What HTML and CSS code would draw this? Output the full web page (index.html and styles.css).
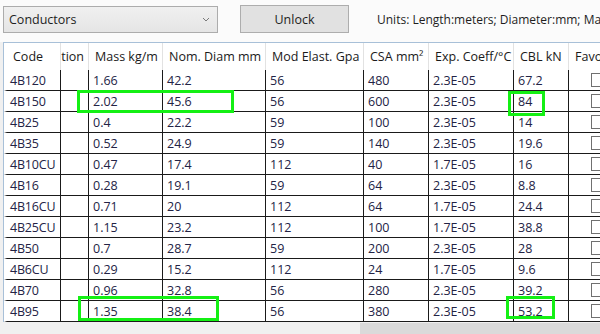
FILE: index.html
```html
<!DOCTYPE html>
<html>
<head>
  <title>Conductors</title>
  <link rel="stylesheet" href="styles.css">
</head>
<body>
  <div class="toolbar">
    <div class="combo">
      <span>Conductors</span>
      <svg class="chev" width="8" height="5" viewBox="0 0 8 5"><path d="M1 1 L4 4 L7 1" fill="none" stroke="#7a7a7a" stroke-width="1"/></svg>
    </div>
    <button class="butt">Unlock</button>
    <div class="units">Units: Length:meters; Diameter:mm; Mass:kg/m</div>
  </div>

  <div class="gridwrap">
    <div class="grid">
      <div class="hd first">Code</div>
      <div class="hd clip">tion</div>
      <div class="hd">Mass kg/m</div>
      <div class="hd">Nom. Diam mm</div>
      <div class="hd">Mod Elast. Gpa</div>
      <div class="hd">CSA mm²</div>
      <div class="hd">Exp. Coeff/°C</div>
      <div class="hd">CBL kN</div>
      <div class="hd">Favourite</div>

      <div class="c first">4B120</div><div class="c"></div><div class="c">1.66</div><div class="c">42.2</div><div class="c">56</div><div class="c">480</div><div class="c">2.3E-05</div><div class="c">67.2</div><div class="c chk"><span class="box"></span></div>
      <div class="c first">4B150</div><div class="c"></div><div class="c">2.02</div><div class="c">45.6</div><div class="c">56</div><div class="c">600</div><div class="c">2.3E-05</div><div class="c">84</div><div class="c chk"><span class="box"></span></div>
      <div class="c first">4B25</div><div class="c"></div><div class="c">0.4</div><div class="c">22.2</div><div class="c">59</div><div class="c">100</div><div class="c">2.3E-05</div><div class="c">14</div><div class="c chk"><span class="box"></span></div>
      <div class="c first">4B35</div><div class="c"></div><div class="c">0.52</div><div class="c">24.9</div><div class="c">59</div><div class="c">140</div><div class="c">2.3E-05</div><div class="c">19.6</div><div class="c chk"><span class="box"></span></div>
      <div class="c first">4B10CU</div><div class="c"></div><div class="c">0.47</div><div class="c">17.4</div><div class="c">112</div><div class="c">40</div><div class="c">1.7E-05</div><div class="c">16</div><div class="c chk"><span class="box"></span></div>
      <div class="c first">4B16</div><div class="c"></div><div class="c">0.28</div><div class="c">19.1</div><div class="c">59</div><div class="c">64</div><div class="c">2.3E-05</div><div class="c">8.8</div><div class="c chk"><span class="box"></span></div>
      <div class="c first">4B16CU</div><div class="c"></div><div class="c">0.71</div><div class="c">20</div><div class="c">112</div><div class="c">64</div><div class="c">1.7E-05</div><div class="c">24.4</div><div class="c chk"><span class="box"></span></div>
      <div class="c first">4B25CU</div><div class="c"></div><div class="c">1.15</div><div class="c">23.2</div><div class="c">112</div><div class="c">100</div><div class="c">1.7E-05</div><div class="c">38.8</div><div class="c chk"><span class="box"></span></div>
      <div class="c first">4B50</div><div class="c"></div><div class="c">0.7</div><div class="c">28.7</div><div class="c">59</div><div class="c">200</div><div class="c">2.3E-05</div><div class="c">28</div><div class="c chk"><span class="box"></span></div>
      <div class="c first">4B6CU</div><div class="c"></div><div class="c">0.29</div><div class="c">15.2</div><div class="c">112</div><div class="c">24</div><div class="c">1.7E-05</div><div class="c">9.6</div><div class="c chk"><span class="box"></span></div>
      <div class="c first">4B70</div><div class="c"></div><div class="c">0.96</div><div class="c">32.8</div><div class="c">56</div><div class="c">280</div><div class="c">2.3E-05</div><div class="c">39.2</div><div class="c chk"><span class="box"></span></div>
      <div class="c first">4B95</div><div class="c"></div><div class="c">1.35</div><div class="c">38.4</div><div class="c">56</div><div class="c">380</div><div class="c">2.3E-05</div><div class="c">53.2</div><div class="c chk"><span class="box"></span></div>
    </div>
    <div class="hscroll"><span class="thumb"></span></div>

    <!-- highlight marks -->
    <div class="mark m1"></div>
    <div class="mark m2"></div>
    <div class="mark m3"></div>
    <div class="mark m4"></div>
  </div>
</body>
</html>
```

FILE: styles.css
```css
html,
body {
  margin: 0;
  width: 600px;
  height: 334px;
  overflow: hidden;
  background-color: #f0f0f0;
  font-family: "Open Sans", "Noto Sans", sans-serif;
  font-size: 12px;
  color: #1e1e1e;
}

.toolbar {
  display: flex;
  align-items: center;
  height: 42px;
  padding: 0 0 0 3px;
  background-color: #fbfbfb;
  box-sizing: border-box;
  white-space: nowrap;
}

.combo {
  flex-shrink: 0;
  width: 215px;
  height: 27px;
  box-sizing: border-box;
  border: 1px solid #acacac;
  background: linear-gradient(#f0f0f0, #e5e5e5);
  display: flex;
  align-items: center;
  justify-content: space-between;
  padding: 0 7px 0 5px;
  margin-top: -4px;
  font-size: 12.5px;
}

.butt {
  flex-shrink: 0;
  margin: -4px 0 0 22px;
  width: 109px;
  height: 28px;
  border: 1px solid #adadad;
  background-color: #e1e1e1;
  font-family: inherit;
  font-size: 12.5px;
  color: #1e1e1e;
  padding: 0;
}

.units {
  flex: 1;
  min-width: 0;
  overflow: hidden;
  margin: -4px 0 0 28px;
}

.gridwrap {
  position: relative;
  margin-left: 3px;
}

.grid {
  display: grid;
  grid-template-columns: 57px 28px 74px 103px 98px 65px 85px 55px 60px;
  grid-template-rows: 27px repeat(12, 21px);
  border-left: 1px solid #a8c0d8;
  border-top: 1px solid #a8c0d8;
  background-color: #fff;
  width: 700px;
}

.hd {
  border-right: 1px solid #e2e2e2;
  padding: 0 0 0 6px;
  display: flex;
  align-items: center;
  overflow: hidden;
  white-space: nowrap;
  color: #1a1a1a;
  font-size: 12.5px;
}

.hd.first {
  padding-left: 9px;
}

.hd.clip {
  padding-left: 0;
  justify-content: flex-end;
  padding-right: 4px;
}

.c {
  border-right: 1px solid #1a1a1a;
  border-bottom: 1px solid #1a1a1a;
  padding: 0 0 0 4px;
  display: flex;
  align-items: center;
  color: #232345;
  font-size: 12.5px;
  box-sizing: border-box;
  overflow: hidden;
  white-space: nowrap;
}

.c.first {
  padding-left: 3px;
  border-left: 3px solid #fff;
  letter-spacing: -0.2px;
}

.c.chk {
  padding-left: 22px;
}

.box {
  width: 12px;
  height: 12px;
  border: 1px solid #707070;
  background-color: #fff;
}

.hscroll {
  height: 13px;
  padding-left: 357px;
}

.thumb {
  display: block;
  height: 12px;
  margin-top: 1px;
  background-color: #dadada;
}

.mark {
  position: absolute;
  border: 3px solid #14f014;
}

.m1 {
  left: 74px;
  top: 48px;
  width: 151px;
  height: 17px;
}

.m2 {
  left: 505px;
  top: 49px;
  width: 31px;
  height: 19px;
}

.m3 {
  left: 75px;
  top: 254px;
  width: 135px;
  height: 19px;
}

.m4 {
  left: 503px;
  top: 254px;
  width: 43px;
  height: 17px;
}
```
